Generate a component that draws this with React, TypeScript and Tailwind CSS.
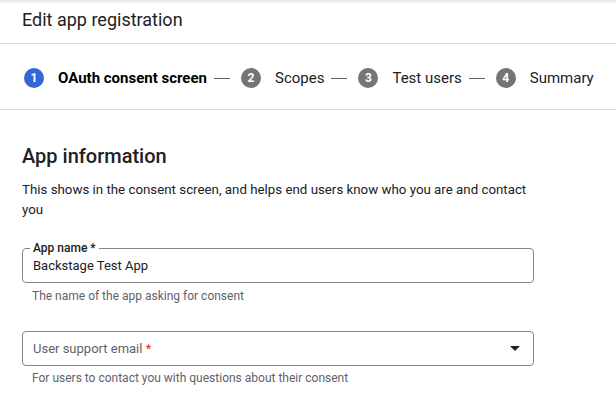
import React from 'react';

const steps = [
  { n: 1, label: 'OAuth consent screen', active: true },
  { n: 2, label: 'Scopes', active: false },
  { n: 3, label: 'Test users', active: false },
  { n: 4, label: 'Summary', active: false },
];

export default function App() {
  return (
    <div
      className="w-[616px] h-[400px] bg-white overflow-hidden relative text-[#202124]"
      style={{ fontFamily: 'Roboto, "Liberation Sans", Arial, sans-serif' }}
    >
      <div className="absolute top-0 left-0 right-0 h-[4px] bg-gradient-to-b from-[#e4e4e4] to-white" />

      <header className="h-[44px] border-b border-[#dadce0] flex items-center px-[22px] pb-[3px]">
        <h1 className="text-[18px] leading-none">Edit app registration</h1>
      </header>

      <nav className="h-[66px] border-b border-[#dadce0] flex items-center pl-[24px] pt-[3px]">
        {steps.map((s, i) => (
          <React.Fragment key={s.n}>
            <div className="flex items-center">
              <span
                className={`w-[20px] h-[20px] rounded-full flex items-center justify-center text-white text-[12px] font-bold ${
                  s.active ? 'bg-[#3367d6]' : 'bg-[#757575]'
                }`}
              >
                {s.n}
              </span>
              <span
                className={`ml-[14px] text-[15px] ${s.active ? 'font-bold text-black' : 'text-[#202124]'}`}
              >
                {s.label}
              </span>
            </div>
            {i < steps.length - 1 && (
              <span className="ml-[7px] mr-[11px] w-[16px] h-px bg-[#5f6368]" />
            )}
          </React.Fragment>
        ))}
      </nav>

      <main className="px-[22px]">
        <h2 className="mt-[34px] text-[20px] leading-[24px] font-medium">App information</h2>
        <p className="mt-[12px] text-[13.3px] leading-[20px] w-[512px]">
          This shows in the consent screen, and helps end users know who you are and contact you
        </p>

        <div className="mt-[28px] w-[512px] h-[35px] border border-[#80868b] rounded-[4px] relative flex items-center pl-[10px]">
          <span className="absolute -top-[9px] left-[7px] bg-white px-[3px] text-[12px] leading-[16px] font-medium text-[#202124]">
            App name *
          </span>
          <span className="text-[13px] pt-[1px]">Backstage Test App</span>
        </div>
        <p className="mt-[5px] pl-[10px] text-[12px] leading-[16px] text-[#5f6368]">The name of the app asking for consent</p>

        <div className="mt-[27px] w-[512px] h-[35px] border border-[#80868b] rounded-[4px] flex items-center justify-between pl-[10px] pr-[13px]">
          <span className="text-[13px] text-[#5f6368]">
            User support email <span className="text-[#d93025]">*</span>
          </span>
          <svg width="10" height="5" viewBox="0 0 10 5">
            <path d="M0 0 L10 0 L5 5 Z" fill="#202124" />
          </svg>
        </div>
        <p className="mt-[4px] pl-[10px] text-[12px] leading-[16px] text-[#5f6368]">
          For users to contact you with questions about their consent
        </p>
      </main>
    </div>
  );
}
